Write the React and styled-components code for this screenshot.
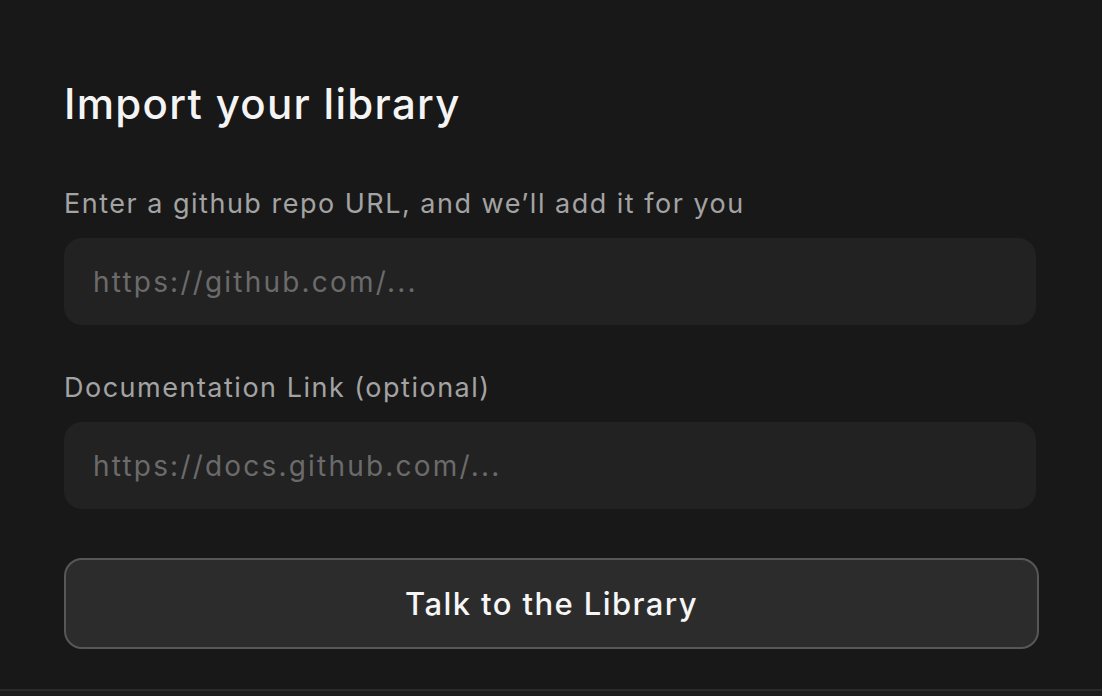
import React from "react";
import styled, { createGlobalStyle } from "styled-components";

const GlobalStyle = createGlobalStyle`
  html, body {
    margin: 0;
    padding: 0;
    background: #181818;
  }
  body {
    font-family: Inter, "Noto Sans", sans-serif;
    -webkit-font-smoothing: antialiased;
  }
  * {
    box-sizing: border-box;
  }
`;

const Page = styled.div`
  width: 100%;
  height: 696px;
  display: flex;
  flex-direction: column;
  background: #181818;
  overflow: hidden;
`;

const Panel = styled.div`
  flex: 1;
  padding: 78px 0 0 64px;
`;

const Form = styled.form`
  width: 975px;
  display: flex;
  flex-direction: column;
`;

const Title = styled.h1`
  margin: 0 0 58px;
  font-size: 42px;
  line-height: 52px;
  font-weight: 500;
  color: #f4f4f4;
  letter-spacing: 1.3px;
`;

const Field = styled.div`
  display: flex;
  flex-direction: column;
  gap: 18px;
  margin-bottom: ${(p) => p.$space || "47px"};
`;

const Label = styled.label`
  font-size: 27px;
  line-height: 32px;
  color: #a3a3a3;
  font-weight: 400;
  letter-spacing: 1.5px;
`;

const Input = styled.input`
  width: 972px;
  height: 87px;
  padding: 0 29px;
  border: none;
  outline: none;
  border-radius: 18px;
  background: #222222;
  color: #e0e0e0;
  font-family: inherit;
  font-size: 28px;
  letter-spacing: 2.2px;

  &::placeholder {
    color: #6b6b6b;
  }
`;

const Button = styled.button`
  width: 975px;
  height: 91px;
  border: 2px solid #575757;
  border-radius: 18px;
  background: #2c2c2c;
  color: #f6f6f6;
  font-family: inherit;
  font-size: 31px;
  font-weight: 500;
  letter-spacing: 1.4px;
  cursor: pointer;
`;

const BottomEdge = styled.div`
  height: 7px;
  border-top: 2px solid #2b2b2b;
  background: #1d1d1d;
`;

export default function App() {
  return (
    <>
      <GlobalStyle />
      <Page>
        <Panel>
          <Form onSubmit={(e) => e.preventDefault()}>
            <Title>Import your library</Title>
            <Field>
              <Label>Enter a github repo URL, and we’ll add it for you</Label>
              <Input placeholder="https://github.com/..." />
            </Field>
            <Field $space="49px">
              <Label>Documentation Link (optional)</Label>
              <Input placeholder="https://docs.github.com/..." />
            </Field>
            <Button type="submit">Talk to the Library</Button>
          </Form>
        </Panel>
        <BottomEdge />
      </Page>
    </>
  );
}
